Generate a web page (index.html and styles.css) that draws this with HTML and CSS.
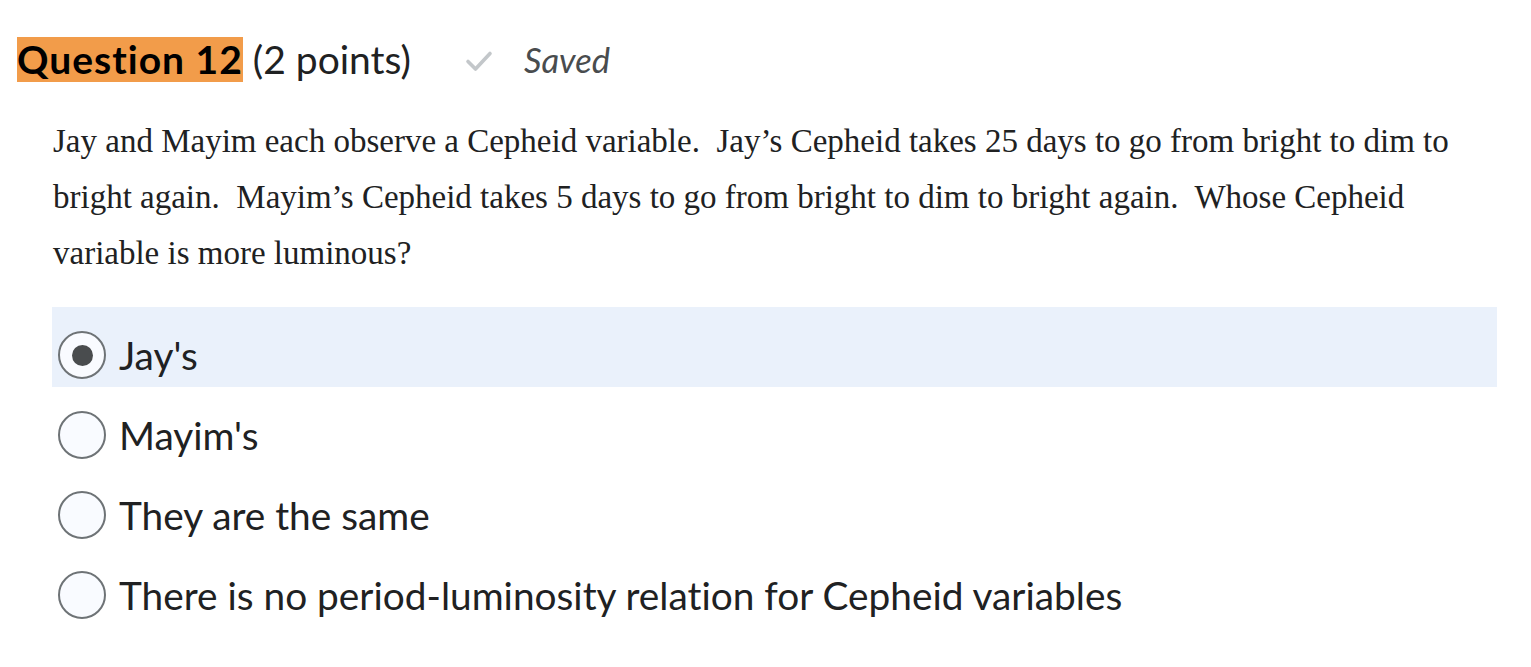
FILE: index.html
```html
<!DOCTYPE html>
<html>
<head>
<meta charset="utf-8">
<link rel="stylesheet" href="styles.css">
</head>
<body>
<div class="question">
  <div class="q-head">
    <h2 class="q-title"><span class="q-num">Question 12</span> <span class="q-points">(2 points)</span></h2>
    <div class="saved">
      <svg class="check" width="28" height="22" viewBox="0 0 28 22"><path d="M3 11.5 L10.5 19 L25 3.5" fill="none" stroke="#c3c7ca" stroke-width="3.6" stroke-linecap="round" stroke-linejoin="round"/></svg>
      <span class="saved-text">Saved</span>
    </div>
  </div>
  <p class="q-text">Jay and Mayim each observe a Cepheid variable.&nbsp; Jay’s Cepheid takes 25 days to go from bright to dim to bright again.&nbsp; Mayim’s Cepheid takes 5 days to go from bright to dim to bright again.&nbsp; Whose Cepheid variable is more luminous?</p>
  <ul class="options">
    <li class="option selected"><span class="radio checked"></span><span class="opt-label">Jay's</span></li>
    <li class="option"><span class="radio"></span><span class="opt-label">Mayim's</span></li>
    <li class="option"><span class="radio"></span><span class="opt-label">They are the same</span></li>
    <li class="option"><span class="radio"></span><span class="opt-label">There is no period-luminosity relation for Cepheid variables</span></li>
  </ul>
</div>
</body>
</html>
```
FILE: styles.css
```css
html, body {
  margin: 0;
  padding: 0;
  background: #ffffff;
}
body {
  font-family: Lato, "Liberation Sans", sans-serif;
  color: #202122;
  font-variant-ligatures: none;
}
.question {
  padding: 37px 34px 0 17px;
}
.q-head {
  display: flex;
  align-items: center;
  height: 45px;
}
.q-title {
  margin: 0;
  font-size: 39px;
  font-weight: 400;
  line-height: 45px;
  white-space: nowrap;
}
.q-num {
  font-weight: 700;
  letter-spacing: 1px;
  background: #f29c4a;
  color: #000;
  display: inline-block;
}
.q-points {
  color: #202122;
}
.saved {
  display: flex;
  align-items: center;
  margin-left: 54px;
}
.check {
  display: block;
  margin-top: 2px;
}
.saved-text {
  margin-left: 31px;
  font-style: italic;
  font-size: 34.5px;
  color: #494c4e;
}
.q-text {
  margin: 31px 0 0 36px;
  font-family: "Liberation Serif", "Times New Roman", serif;
  font-size: 33px;
  line-height: 56px;
  color: #202122;
}
.options {
  list-style: none;
  margin: 26px 0 0 35px;
  padding: 0;
}
.option {
  display: flex;
  align-items: center;
  box-sizing: border-box;
  height: 80px;
  padding: 24px 0 8px 6px;
}
.option.selected {
  background: #eaf1fb;
}
.radio {
  width: 44px;
  height: 44px;
  border: 2px solid #6e7376;
  border-radius: 50%;
  background: #f9fbff;
  display: flex;
  align-items: center;
  justify-content: center;
  flex: none;
}
.radio.checked::after {
  content: "";
  width: 21px;
  height: 21px;
  border-radius: 50%;
  background: #494c4e;
}
.opt-label {
  margin-left: 13px;
  font-size: 38.8px;
  color: #202122;
}
```
